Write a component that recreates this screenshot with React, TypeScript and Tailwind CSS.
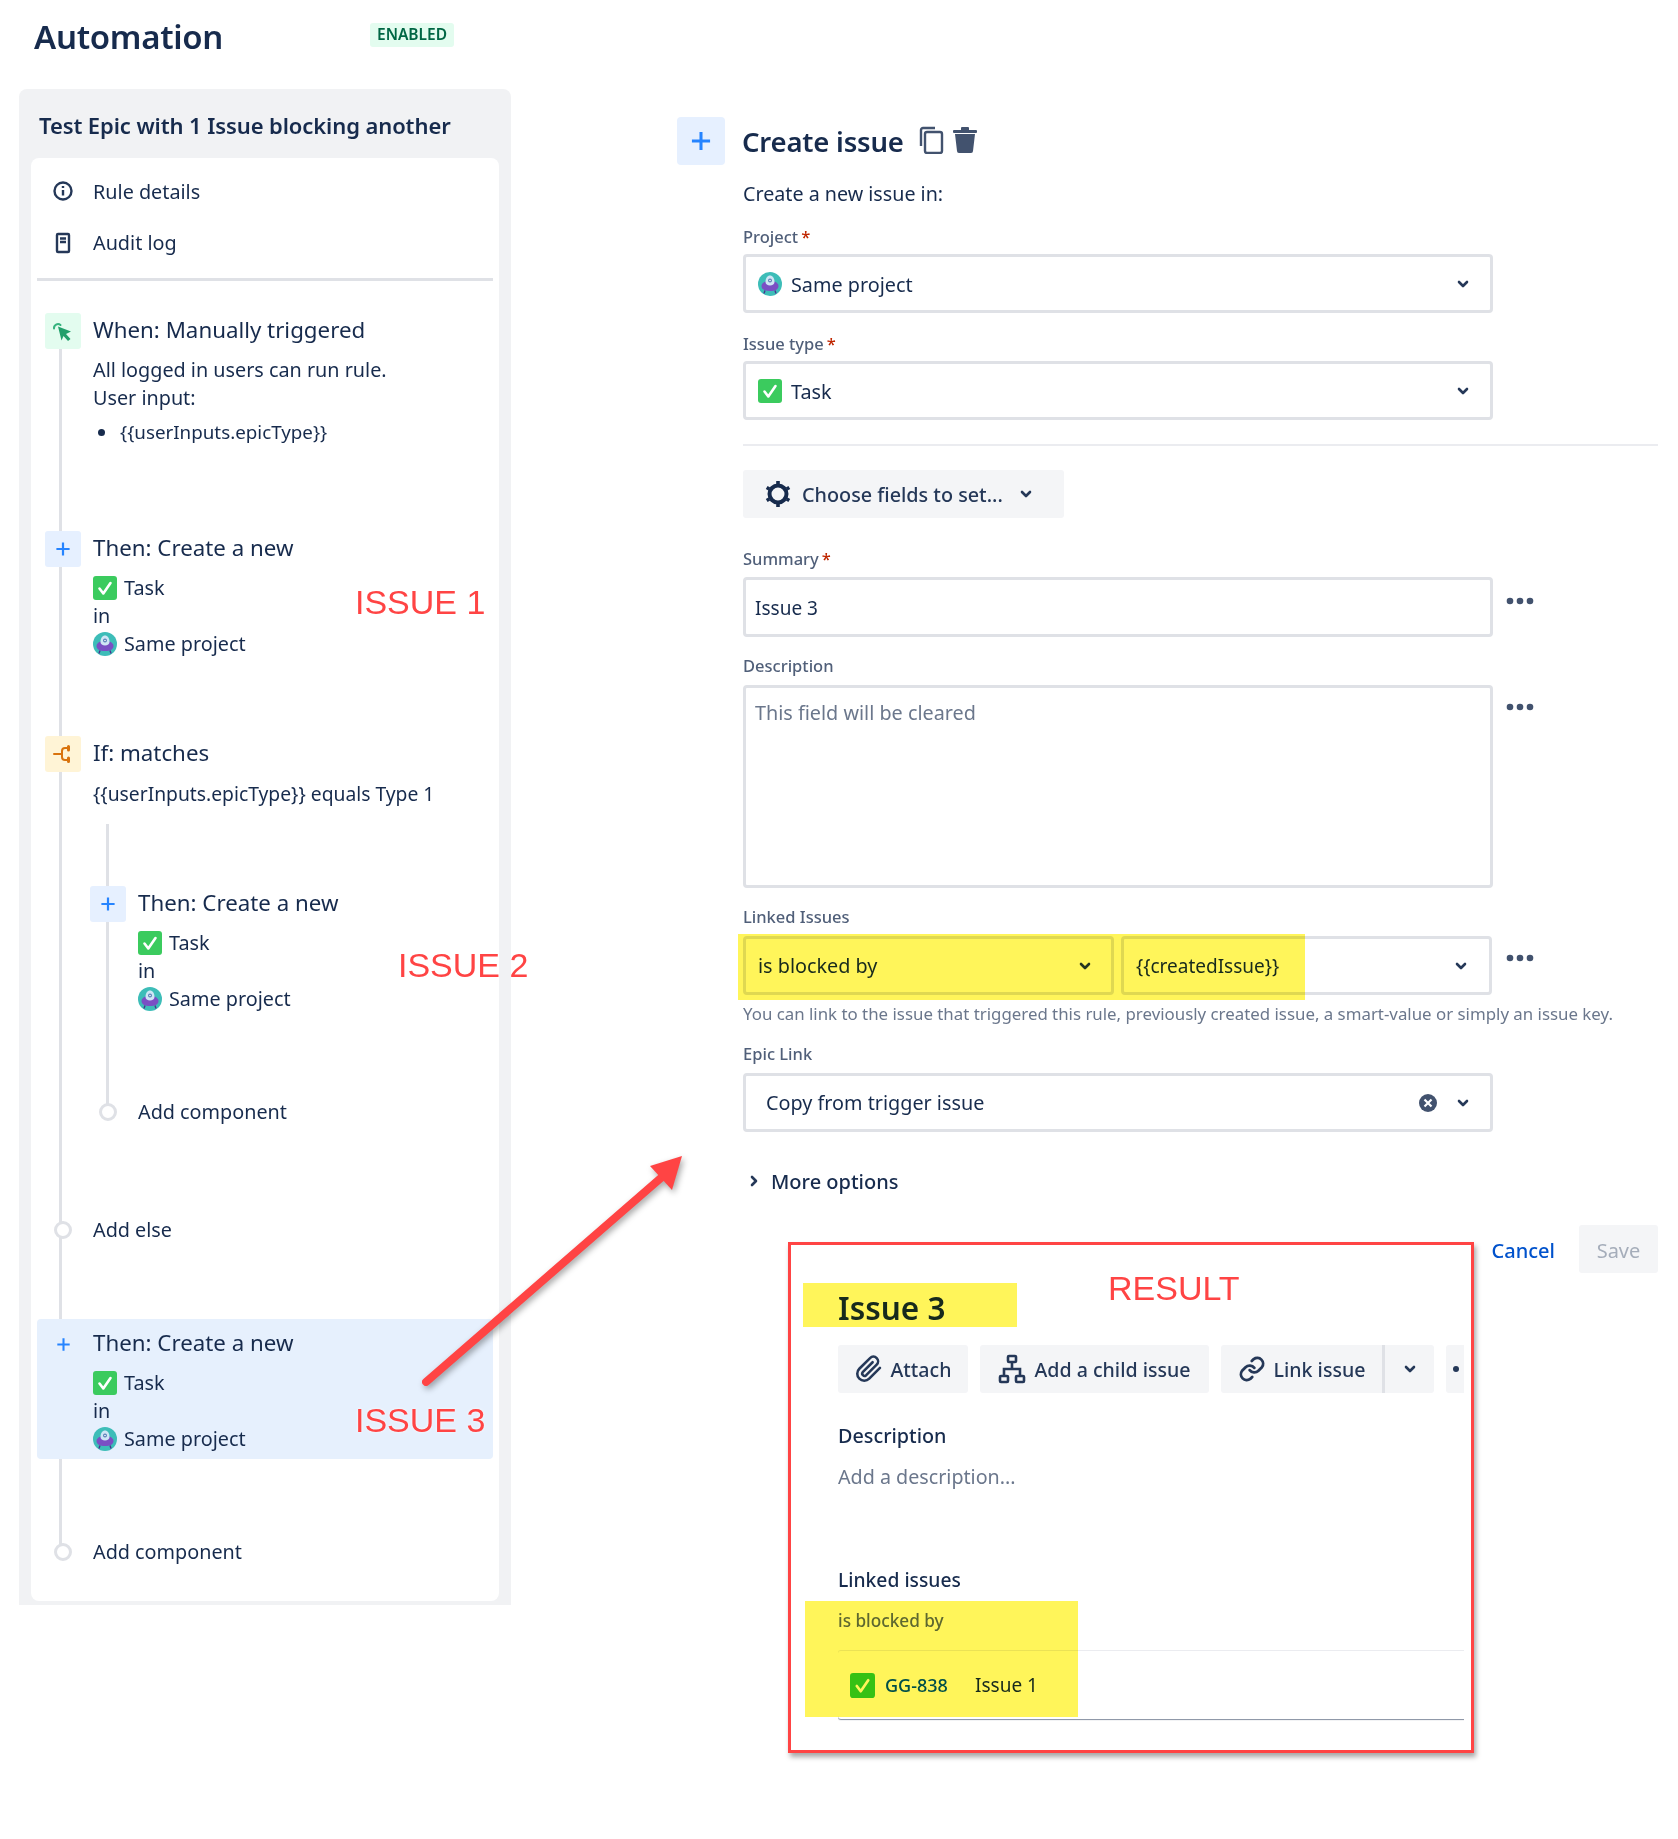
import React from "react";

const Chevron = ({ className = "" }: { className?: string }) => (
  <svg viewBox="0 0 16 16" className={"w-4 h-4 shrink-0 " + className} fill="none" stroke="#253858" strokeWidth="2.6" strokeLinecap="round" strokeLinejoin="round">
    <path d="M4 6l4 4 4-4" />
  </svg>
);

const TaskIcon = ({ size = 25, bg = "#3bcb5e" }: { size?: number; bg?: string }) => (
  <svg width={size} height={size} viewBox="0 0 24 24" className="shrink-0">
    <rect x="0" y="0" width="24" height="24" rx="3" fill={bg} />
    <path d="M6.5 12.5l3.8 5L17.5 7" fill="none" stroke="#fff" strokeWidth="2.6" strokeLinecap="round" strokeLinejoin="round" />
  </svg>
);

const ProjectIcon = ({ size = 25 }: { size?: number }) => (
  <svg width={size} height={size} viewBox="0 0 24 24" className="shrink-0">
    <circle cx="12" cy="12" r="12" fill="#3dbdb8" />
    <path d="M3.5 14c0-2 1.500-3.500 4-4.500h9c2.500 1 4 2.500 4 4.500 0 3-3 5-8.500 5S3.500 17 3.500 14z" fill="#7a4fc4" />
    <path d="M7.500 10c0-4 2-6.500 4.500-6.500s4.500 2.500 4.500 6.500c0 2-2 3.500-4.500 3.500S7.500 12 7.500 10z" fill="#cfe6f5" />
    <circle cx="12" cy="8.500" r="2" fill="#5a7fb8" />
    <circle cx="12" cy="8.500" r="0.800" fill="#fff" />
    <path d="M7 18.500l-1 3M17 18.500l1 3" stroke="#4c3590" strokeWidth="1.400" />
  </svg>
);

const IconBox = ({ bg, children, size = "w-9 h-9" }: { bg: string; children: React.ReactNode; size?: string }) => (
  <div className={"relative z-10 flex items-center justify-center rounded-[3px] shrink-0 " + size + " " + bg}>{children}</div>
);

const PlusIcon = ({ size = 16 }: { size?: number }) => (
  <svg width={size} height={size} viewBox="0 0 16 16" fill="none" stroke="#2684ff" strokeWidth="2.2" strokeLinecap="square">
    <path d="M8 2.500v11M2.500 8h11" />
  </svg>
);

const Heading = ({ children }: { children: React.ReactNode }) => (
  <div className="text-[22.3px] leading-[34px] h-9 whitespace-nowrap">{children}</div>
);

const CreateBody = () => (
  <div className="text-[19.8px]">
    <div className="flex items-center gap-[7px] h-7 mt-[7px]"><TaskIcon size={24} /><span>Task</span></div>
    <div className="h-7 leading-7">in</div>
    <div className="flex items-center gap-[7px] h-7"><ProjectIcon size={24} /><span>Same project</span></div>
  </div>
);

const AddRow = ({ label, className = "" }: { label: string; className?: string }) => (
  <div className={"flex items-center gap-3 h-7 " + className}>
    <div className="w-9 flex justify-center shrink-0 relative z-10">
      <div className="w-[18px] h-[18px] rounded-full border-[3px] border-[#dfe1e6] bg-white" />
    </div>
    <span>{label}</span>
  </div>
);

const Label = ({ text, req, className = "" }: { text: string; req?: boolean; className?: string }) => (
  <div className={"h-5 leading-5 text-[16.5px] font-medium text-[#505f79] " + className}>
    {text}
    {req && <span className="text-[#bf2600] ml-[3px]">*</span>}
  </div>
);

const Field = ({ children, className = "" }: { children: React.ReactNode; className?: string }) => (
  <div className={"flex items-center border-[3px] border-[#dfe1e6] rounded-[4px] bg-white h-[59px] text-[19.8px] " + className}>{children}</div>
);

const Dots = ({ className = "" }: { className?: string }) => (
  <svg width="28" height="8" viewBox="0 0 28 8" className={"shrink-0 " + className} fill="#42526e">
    <circle cx="4" cy="4" r="3.300" /><circle cx="14" cy="4" r="3.300" /><circle cx="24" cy="4" r="3.300" />
  </svg>
);

const ResultBtn = ({ children, className = "" }: { children: React.ReactNode; className?: string }) => (
  <div className={"flex items-center justify-center gap-2 h-12 bg-[#f4f5f7] rounded-[3px] text-[19.6px] font-medium text-[#253858] shrink-0 " + className}>{children}</div>
);

export default function App() {
  return (
    <div className="relative h-[1839px] w-[1678px] overflow-hidden bg-white text-[#172b4d] font-['Noto_Sans','Open_Sans',sans-serif]">
      <div className="flex">
        {/* Left column */}
        <div className="w-[492px] ml-[19px] shrink-0">
          <div className="flex items-start h-[89px]">
            <h1 className="ml-[15px] mt-[13px] text-[33px] leading-[48px] font-semibold tracking-[-0.3px]">Automation</h1>
            <span className="ml-auto mr-[57px] mt-[23px] w-[84px] h-6 flex items-center justify-center rounded-[3px] bg-[#e3fcef] text-[#006644] text-[15.5px] font-semibold">ENABLED</span>
          </div>
          <div className="bg-[#f1f2f4] rounded-t-[8px] px-3 pb-1 pt-[17px]">
            <div className="px-2 h-[38px] leading-[38px] text-[22px] font-semibold mb-[14px] whitespace-nowrap tracking-[-0.1px]">Test Epic with 1 Issue blocking another</div>
            <div className="bg-white rounded-[8px] px-[6px] pt-[7px] pb-[35px] text-[19.8px] relative">
              <div className="flex items-center gap-3 h-[52px] px-2">
                <div className="w-9 flex justify-center">
                  <svg width="22" height="22" viewBox="0 0 22 22" fill="none" stroke="#253858" strokeWidth="2.400"><circle cx="11" cy="11" r="8.500" /><path d="M11 10v5.500" /><path d="M11 6v2" /></svg>
                </div>
                <span className="mt-[1px]">Rule details</span>
              </div>
              <div className="flex items-center gap-3 h-[52px] px-2">
                <div className="w-9 flex justify-center">
                  <svg width="18" height="22" viewBox="0 0 18 22" fill="none" stroke="#253858" strokeWidth="2.400"><rect x="3" y="2" width="12" height="18" rx="1" /><path d="M6 6.500h6M6 10h6" /></svg>
                </div>
                <span>Audit log</span>
              </div>
              <div className="h-[3px] bg-[#dfe1e6] mt-[9px]" />

              {/* Timeline */}
              <div className="relative pt-8">
                <div className="absolute left-[22px] top-[60px] w-[3px] h-[980px] bg-[#dfe1e6]" />
                <div className="absolute left-[22px] top-[1170px] w-[3px] h-[100px] bg-[#dfe1e6]" />
                <div className="absolute left-[69px] top-[543px] w-[3px] h-[280px] bg-[#dfe1e6]" />

                <div className="flex gap-3 px-2">
                  <IconBox bg="bg-[#e3fcef]">
                    <svg width="24" height="24" viewBox="0 0 24 24">
                      <path d="M3 9.500a4 4 0 0 1 6.500-3.500" fill="none" stroke="#36b37e" strokeWidth="2" strokeLinecap="round" />
                      <path d="M7 7.500l13 5-5 2.500 4.500 5-2.500 2-4.500-5-2 4.500z" fill="#22a06b" />
                    </svg>
                  </IconBox>
                  <div>
                    <Heading>When: Manually triggered</Heading>
                    <div className="h-7 leading-7 mt-[7px]">All logged in users can run rule.</div>
                    <div className="h-7 leading-7">User input:</div>
                    <div className="h-7 leading-7 mt-[6px] flex items-center text-[18.8px]">
                      <span className="w-[7px] h-[7px] rounded-full bg-[#172b4d] ml-[5px] mr-[15px]" />
                      {"{{userInputs.epicType}}"}
                    </div>
                  </div>
                </div>

                <div className="flex gap-3 px-2 mt-[85px]">
                  <IconBox bg="bg-[#e6f0ff]"><PlusIcon /></IconBox>
                  <div>
                    <Heading>Then: Create a new</Heading>
                    <CreateBody />
                  </div>
                </div>

                <div className="flex gap-3 px-2 mt-[78px]">
                  <IconBox bg="bg-[#fff4d6]">
                    <svg width="20" height="20" viewBox="0 0 20 20" fill="none" stroke="#d9730d" strokeWidth="2" strokeLinecap="round" strokeLinejoin="round">
                      <path d="M1 10h7M14 4h-2a3 3 0 0 0-3 3v6a3 3 0 0 0 3 3h2" />
                      <path d="M15.500 2.500v3.500M15.500 14v3.500" strokeWidth="3" />
                    </svg>
                  </IconBox>
                  <div>
                    <Heading>If: matches</Heading>
                    <div className="h-7 leading-7 mt-2 text-[19.300px] whitespace-nowrap">{"{{userInputs.epicType}} equals Type 1"}</div>
                  </div>
                </div>

                <div className="flex gap-3 pl-[53px] mt-[78px]">
                  <IconBox bg="bg-[#e6f0ff]"><PlusIcon /></IconBox>
                  <div>
                    <Heading>Then: Create a new</Heading>
                    <CreateBody />
                  </div>
                </div>

                <AddRow label="Add component" className="pl-[53px] mt-[85px]" />
                <AddRow label="Add else" className="px-2 mt-[90px]" />

                <div className="relative z-10 flex gap-3 px-2 mt-[75px] pt-[7px] pb-[6px] bg-[#e6f0fd] rounded-[4px]">
                  <div className="w-9 h-9 flex items-center justify-center shrink-0"><PlusIcon size={15} /></div>
                  <div>
                    <Heading>Then: Create a new</Heading>
                    <CreateBody />
                  </div>
                </div>

                <AddRow label="Add component" className="px-2 mt-[79px]" />
              </div>
            </div>
          </div>
        </div>

        {/* Right column */}
        <div className="ml-[166px] mt-[117px] w-[981px] shrink-0">
          <div className="flex items-center gap-[17px] h-12">
            <div className="w-12 h-12 rounded-[4px] bg-[#e6f0ff] flex items-center justify-center"><PlusIcon size={22} /></div>
            <div className="text-[27.5px] font-semibold mt-[2px] tracking-[-0.2px] w-[160px] whitespace-nowrap">Create issue</div>
            <div className="flex items-center gap-[9px] -mt-[2px] ml-0">
              <svg width="25" height="28" viewBox="0 0 25 28" fill="none" stroke="#42526e" strokeWidth="2.400">
                <rect x="6" y="6" width="17" height="21" rx="2" />
                <path d="M2 20V4a2 2 0 0 1 2-2h12" />
              </svg>
              <svg width="24" height="26" viewBox="0 0 24 26" fill="#42526e">
                <rect x="0" y="3" width="24" height="3" rx="1" />
                <rect x="8" y="0" width="8" height="4" rx="1" />
                <path d="M2 7h20l-2 17a2 2 0 0 1-2 2H6a2 2 0 0 1-2-2z" />
              </svg>
            </div>
          </div>

          <div className="pl-[66px]">
            <div className="h-7 leading-7 text-[19.700px] mt-[15px]">Create a new issue in:</div>
            <Label text="Project" req className="mt-[19px]" />
            <Field className="mt-[7px] w-[750px] pl-[12px] pr-[19px]">
              <ProjectIcon size={24} />
              <span className="ml-[9px] flex-1 mt-[2px]">Same project</span>
              <Chevron />
            </Field>
            <Label text="Issue type" req className="mt-[21px]" />
            <Field className="mt-[7px] w-[750px] pl-[12px] pr-[19px]">
              <TaskIcon size={24} />
              <span className="ml-[9px] flex-1 mt-[2px]">Task</span>
              <Chevron />
            </Field>
            <div className="h-[2px] bg-[#ebecf0] mt-6 w-[915px]" />
            <div className="mt-6 h-12 w-[321px] bg-[#f4f5f7] rounded-[3px] flex items-center pl-[21px] text-[19.8px] font-medium text-[#253858]">
              <svg width="28" height="28" viewBox="0 0 28 28" fill="none" stroke="#172b4d" strokeWidth="4">
                <circle cx="14" cy="14" r="8.500" />
                <path d="M14 1v3M14 24v3M2.700 7.500l2.600 1.500M22.700 19l2.600 1.500M2.700 20.500l2.600-1.500M22.700 9l2.600-1.500" strokeWidth="3.600" />
              </svg>
              <span className="ml-[10px] whitespace-nowrap mt-[1px]">Choose fields to set...</span>
              <Chevron className="ml-[15px]" />
            </div>

            <Label text="Summary" req className="mt-[31px]" />
            <div className="flex items-start mt-2">
              <Field className="w-[750px] h-[60px] pl-[9px]"><span className="mt-[3px] text-[19px]">Issue 3</span></Field>
              <Dots className="ml-[13px] mt-[20px]" />
            </div>
            <Label text="Description" className="mt-[19px]" />
            <div className="flex items-start mt-[9px]">
              <div className="w-[750px] h-[203px] border-[3px] border-[#dfe1e6] rounded-[4px] pl-[9px] pt-[11px] text-[19.8px] leading-7 text-[#6b778c]">This field will be cleared</div>
              <Dots className="ml-[13px] mt-[18px]" />
            </div>
            <Label text="Linked Issues" className="mt-[19px]" />
            <div className="flex items-start mt-[9px]">
              <Field className="w-[371px] pl-[12px] pr-[18px]"><span className="flex-1 mt-[1px]">is blocked by</span><Chevron /></Field>
              <Field className="w-[371px] ml-[7px] pl-[12px] pr-[20px]"><span className="flex-1 mt-[1px] text-[19px]">{"{{createdIssue}}"}</span><Chevron /></Field>
              <Dots className="ml-[14px] mt-[18px]" />
            </div>
            <div className="h-[22px] leading-[22px] mt-2 text-[16.85px] text-[#6b778c] whitespace-nowrap">You can link to the issue that triggered this rule, previously created issue, a smart-value or simply an issue key.</div>
            <Label text="Epic Link" className="mt-[19px]" />
            <Field className="mt-[9px] w-[750px] pl-[20px] pr-[19px]">
              <span className="flex-1 mt-[1px]">Copy from trigger issue</span>
              <svg width="20" height="20" viewBox="0 0 20 20" className="mr-[17px]">
                <circle cx="10" cy="10" r="9" fill="#42526e" />
                <path d="M6.500 6.500l7 7M13.500 6.500l-7 7" stroke="#fff" strokeWidth="2.200" />
              </svg>
              <Chevron />
            </Field>
            <div className="flex items-center h-7 mt-[35px] ml-[3px] text-[20px] font-medium">
              <svg width="16" height="16" viewBox="0 0 16 16" fill="none" stroke="#253858" strokeWidth="2.600" strokeLinecap="round" strokeLinejoin="round"><path d="M6 4l4 4-4 4" /></svg>
              <span className="ml-[9px] mt-[1px]">More options</span>
            </div>
            <div className="flex justify-end items-center gap-6 mt-[30px] text-[20px] font-medium">
              <span className="text-[#0052cc] mt-[3px]">Cancel</span>
              <div className="w-[79px] h-12 rounded-[3px] bg-[#f4f5f7] text-[#a5adba] font-normal flex items-center justify-center pt-[3px]">Save</div>
            </div>
          </div>
        </div>
      </div>

      {/* Pasted result image */}
      <div className="absolute left-[788px] top-[1242px] w-[686px] h-[511px] bg-white border-[3px] border-[#ff4444] shadow-[2px_4px_5px_rgba(0,0,0,0.35)] pl-[47px] pt-[41px]">
        <div className="overflow-hidden w-[626px]">
          <div className="h-[44px] leading-[44px] text-[31.5px] font-semibold">Issue 3</div>
          <div className="flex mt-[15px] gap-[12px]">
            <ResultBtn className="w-[130px]">
              <svg width="28" height="30" viewBox="0 0 24 24" fill="none" stroke="#253858" strokeWidth="2.200" strokeLinecap="round" strokeLinejoin="round"><path d="M21.400 11.100l-9.200 9.200a6 6 0 0 1-8.500-8.500l9.200-9.200a4 4 0 0 1 5.700 5.700l-9.200 9.200a2 2 0 0 1-2.800-2.800l8.500-8.500" /></svg>
              <span className="mt-[1px]">Attach</span>
            </ResultBtn>
            <ResultBtn className="w-[229px]">
              <svg width="28" height="30" viewBox="0 0 28 30" fill="none" stroke="#253858" strokeWidth="2.600">
                <rect x="10" y="2" width="8" height="6" rx="1" /><rect x="2" y="22" width="8" height="6" rx="1" /><rect x="18" y="22" width="8" height="6" rx="1" />
                <path d="M14 8v7M6 22v-7h16v7" />
              </svg>
              <span className="mt-[1px]">Add a child issue</span>
            </ResultBtn>
            <div className="flex shrink-0 bg-[#f4f5f7] rounded-[3px] h-12 w-[213px]">
              <div className="w-[164px] flex items-center justify-center gap-2 border-r-[3px] border-[#dfe1e6] text-[19.6px] font-medium text-[#253858]">
                <svg width="28" height="28" viewBox="0 0 24 24" fill="none" stroke="#253858" strokeWidth="2.400" strokeLinecap="round" strokeLinejoin="round"><path d="M10 13a5 5 0 0 0 7.500.5l3-3a5 5 0 0 0-7-7l-1.700 1.700" /><path d="M14 11a5 5 0 0 0-7.500-.5l-3 3a5 5 0 0 0 7 7l1.700-1.700" /></svg>
                <span className="mt-[1px]">Link issue</span>
              </div>
              <div className="flex-1 flex items-center justify-center"><Chevron /></div>
            </div>
            <div className="w-[40px] h-12 bg-[#f4f5f7] rounded-[3px] shrink-0 pl-[7px] flex items-center"><span className="w-[6px] h-[6px] rounded-full bg-[#253858]" /></div>
          </div>
          <div className="h-6 leading-6 mt-[31px] text-[19.8px] font-medium">Description</div>
          <div className="h-7 leading-7 mt-[15px] text-[19.7px] text-[#6b778c]">Add a description...</div>
          <div className="h-6 leading-6 mt-[77px] text-[19.3px] font-medium">Linked issues</div>
          <div className="h-[22px] leading-[22px] mt-[18px] text-[17.2px] font-medium text-[#5e6c84]">is blocked by</div>
          <div className="mt-[18px] h-[69px] w-[640px] rounded-[3px] border-t border-[#ebecf0] shadow-[0_1px_1px_rgba(9,30,66,0.5)] flex items-center pl-3 mb-1">
            <TaskIcon size={25} bg="#36c937" />
            <span className="ml-[10px] w-[90px] text-[18px] font-medium text-[#0052cc]">GG-838</span>
            <span className="text-[19px]">Issue 1</span>
          </div>
        </div>
      </div>

      {/* Yellow highlighter marks */}
      <div className="absolute z-20 left-[738px] top-[934px] w-[567px] h-[66px] bg-[#fff55a] mix-blend-multiply" />
      <div className="absolute z-20 left-[803px] top-[1283px] w-[214px] h-[44px] bg-[#fff55a] mix-blend-multiply" />
      <div className="absolute z-20 left-[805px] top-[1601px] w-[273px] h-[116px] bg-[#fff55a] mix-blend-multiply" />

      {/* Red annotations */}
      <svg className="absolute z-20 left-0 top-0 pointer-events-none drop-shadow-[2px_3px_3px_rgba(0,0,0,0.35)]" width="1678" height="1839" fill="none">
        <path d="M426 1382L662 1177" stroke="#ff4444" strokeWidth="8" strokeLinecap="round" />
        <path d="M682 1156L650 1166L672 1190z" fill="#ff4444" />
      </svg>
      <div className="absolute inset-0 z-30 pointer-events-none font-['Liberation_Sans',Arial,sans-serif] text-[#ff4444] text-[34px] leading-none whitespace-nowrap">
        <span className="absolute left-[355px] top-[585px]">ISSUE 1</span>
        <span className="absolute left-[398px] top-[948px]">ISSUE 2</span>
        <span className="absolute left-[355px] top-[1403px] [text-shadow:0_0_3px_#fff]">ISSUE 3</span>
        <span className="absolute left-[1108px] top-[1271px]">RESULT</span>
      </div>
    </div>
  );
}
